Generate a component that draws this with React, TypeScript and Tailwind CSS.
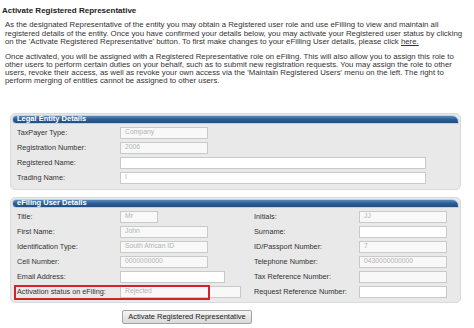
import React from "react";

const font = { fontFamily: '"Liberation Sans", Arial, sans-serif' };

function Field({
  value = "",
  w,
  disabled = false,
}: {
  value?: string;
  w: string;
  disabled?: boolean;
}) {
  return (
    <div
      className={`h-[12px] border border-[#c9c9c9] ${w} ${
        disabled ? "bg-[#f8f8f8]" : "bg-white"
      } flex items-center pl-[4px] text-[6.8px] leading-none text-[#b3b3b3]`}
    >
      {value}
    </div>
  );
}

function Row({
  label,
  lw = "w-[103px]",
  children,
}: {
  label: string;
  lw?: string;
  children: React.ReactNode;
}) {
  return (
    <div className="flex items-center h-[12px]">
      <span className={`${lw} text-[7.3px] text-[#333] leading-none whitespace-nowrap`}>{label}</span>
      {children}
    </div>
  );
}

function Header({ title }: { title: string }) {
  return (
    <div className="mx-[1px] mt-[1px] h-[9px] rounded-l-[4px] rounded-tr-[7px] border border-[#b9d3ea] bg-gradient-to-b from-[#5a8abd] via-[#2b5d93] to-[#234f82] flex items-center pl-[4px]">
      <span className="text-white font-bold text-[7.5px] leading-none">{title}</span>
    </div>
  );
}

export default function App() {
  return (
    <div className="w-[474px] h-[328px] bg-white overflow-hidden" style={font}>
      <div className="pl-[2px] pt-[7px]">
        <h1 className="font-bold text-[8px] leading-[8px] text-[#222]">
          Activate Registered Representative
        </h1>
      </div>

      <div className="pl-[5px] pt-[6px] text-[7.8px] text-[#333] whitespace-nowrap">
        <p className="leading-[8.5px]">
          As the designated Representative of the entity you may obtain a Registered user role and use eFilling to view and maintain all
          <br />
          registered details of the entity. Once you have confirmed your details below, you may activate your Registered user status by clicking
          <br />
          on the 'Activate Registered Representative' button. To first make changes to your eFilling User details, please click{" "}
          <span className="underline">here.</span>
        </p>
        <p className="mt-[6px] leading-[8px]">
          Once activated, you will be assigned with a Registered Representative role on eFiling. This will also allow you to assign this role to
          <br />
          other users to perform certain duties on your behalf, such as to submit new registration requests. You may assign the role to other
          <br />
          users, revoke their access, as well as revoke your own access via the 'Maintain Registered Users' menu on the left. The right to
          <br />
          perform merging of entities cannot be assigned to other users.
        </p>
      </div>

      {/* Legal Entity Details */}
      <div className="ml-[10px] mt-[28px] w-[451px] rounded-[5px] border border-[#d9d9d9] bg-[#e9e9e9] pb-[5px]">
        <Header title="Legal Entity Details" />
        <div className="pl-[6px] pt-[3px] flex flex-col gap-[3px]">
          <Row label="TaxPayer Type:">
            <Field value="Company" w="w-[88px]" disabled />
          </Row>
          <Row label="Registration Number:">
            <Field value="2006" w="w-[88px]" disabled />
          </Row>
          <Row label="Registered Name:">
            <Field w="w-[306px]" />
          </Row>
          <Row label="Trading Name:">
            <Field value="I" w="w-[306px]" />
          </Row>
        </div>
      </div>

      {/* eFiling User Details */}
      <div className="ml-[10px] mt-[7px] w-[451px] rounded-[5px] border border-[#d9d9d9] bg-[#e9e9e9] pb-[4px]">
        <Header title="eFiling User Details" />
        <div className="pl-[6px] pt-[3px] grid grid-cols-[237px_1fr] gap-y-[3px]">
          <Row label="Title:">
            <Field value="Mr" w="w-[38px]" disabled />
          </Row>
          <Row label="Initials:" lw="w-[105px]">
            <Field value="JJ" w="w-[88px]" disabled />
          </Row>

          <Row label="First Name:">
            <Field value="John" w="w-[88px]" disabled />
          </Row>
          <Row label="Surname:" lw="w-[105px]">
            <Field w="w-[88px]" />
          </Row>

          <Row label="Identification Type:">
            <Field value="South African ID" w="w-[88px]" disabled />
          </Row>
          <Row label="ID/Passport Number:" lw="w-[105px]">
            <Field value="7" w="w-[88px]" disabled />
          </Row>

          <Row label="Cell Number:">
            <Field value="0000000000" w="w-[88px]" disabled />
          </Row>
          <Row label="Telephone Number:" lw="w-[105px]">
            <Field value="0430000000000" w="w-[88px]" disabled />
          </Row>

          <Row label="Email Address:">
            <Field w="w-[105px]" />
          </Row>
          <Row label="Tax Reference Number:" lw="w-[105px]">
            <Field w="w-[88px]" disabled />
          </Row>

          <div className="relative">
            <Row label="Activation status on eFiling:">
              <Field value="Rejected" w="w-[121px]" disabled />
            </Row>
            <div className="absolute left-[-3px] top-[-1px] w-[196px] h-[15px] border-2 border-[#d4202f]" />
          </div>
          <Row label="Request Reference Number:" lw="w-[105px]">
            <Field w="w-[88px]" />
          </Row>
        </div>
      </div>

      <div className="flex pl-[122px] mt-[7px]">
        <button className="h-[14px] w-[130px] rounded-[2px] border border-[#a3a3a3] bg-gradient-to-b from-[#f6f6f6] to-[#d9d9d9] text-[7.5px] leading-none text-[#222]">
          Activate Registered Representative
        </button>
      </div>
    </div>
  );
}
